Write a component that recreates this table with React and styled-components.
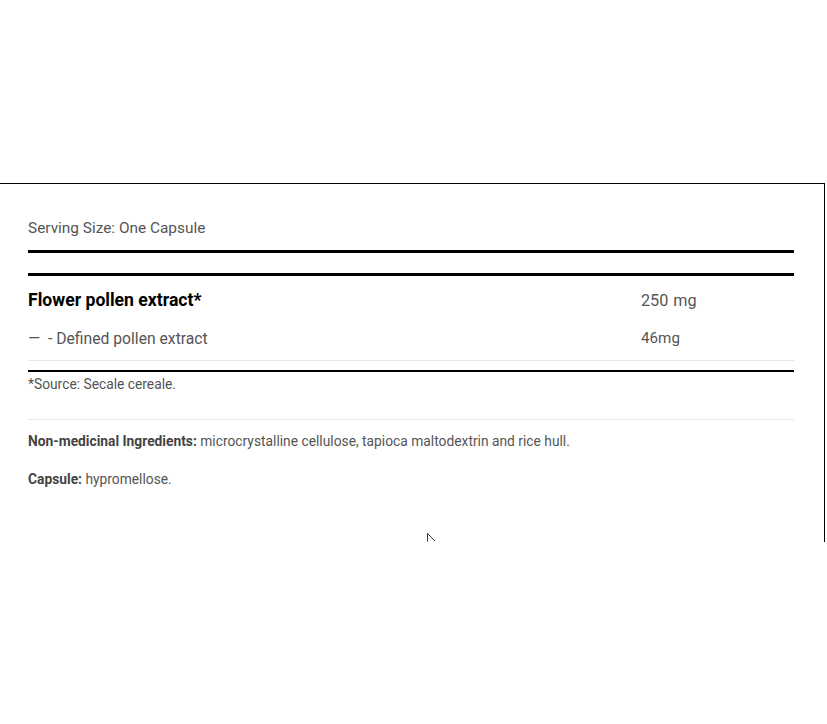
import React from 'react'
import styled, { createGlobalStyle } from 'styled-components'

const GlobalStyle = createGlobalStyle`
   body {
      margin: 0;
      background: #fff;
      font-family: 'Roboto', 'Liberation Sans', sans-serif;
   }
`

const rows = [
   { name: 'Flower pollen extract*', amount: '250 mg', main: true },
   { name: '—  - Defined pollen extract', amount: '46mg' },
]

const App = () => {
   return (
      <Page>
         <GlobalStyle />
         <Panel>
            <Serving>Serving Size: One Capsule</Serving>
            <ThickRule />
            <ThickRule $gap />
            <Table>
               {rows.map((row) => (
                  <Row key={row.name}>
                     <Name $main={row.main}>{row.name}</Name>
                     <Amount $main={row.main}>{row.amount}</Amount>
                  </Row>
               ))}
            </Table>
            <BlackRule />
            <Note>*Source: Secale cereale.</Note>
            <Ingredients>
               <Para>
                  <strong>Non-medicinal Ingredients:</strong> microcrystalline cellulose, tapioca maltodextrin and rice hull.
               </Para>
               <Para>
                  <strong>Capsule:</strong> hypromellose.
               </Para>
            </Ingredients>
            <Cursor width="10" height="10" viewBox="0 0 10 10">
               <path d="M0.5 0.5 V8.5 M0.5 0.5 L8 8" stroke="#333" strokeWidth="1" fill="none" />
            </Cursor>
         </Panel>
      </Page>
   )
}

const Page = styled.div`
   padding-top: 183px;
`

const Panel = styled.div`
   position: relative;
   box-sizing: border-box;
   width: 825px;
   height: 359px;
   border-top: 1px solid #000;
   border-right: 1px solid #000;
   padding: 0 30px 0 28px;
`

const Serving = styled.div`
   padding-top: 34px;
   margin-bottom: 12px;
   font-size: 15.4px;
   line-height: 20px;
   color: #555;
`

const ThickRule = styled.div`
   height: 3px;
   background: #000;
   margin-top: ${(p) => (p.$gap ? '20px' : '0')};
`

const Table = styled.div`
   display: flex;
   flex-direction: column;
   padding-top: 14px;
   padding-bottom: 12px;
   gap: 18px;
   border-bottom: 1px solid #e6e6e6;
`

const Row = styled.div`
   display: grid;
   grid-template-columns: 613px 1fr;
   align-items: center;
   height: 20px;
`

const Name = styled.div`
   white-space: pre;
   font-size: ${(p) => (p.$main ? '17.6px' : '15.7px')};
   font-weight: ${(p) => (p.$main ? 700 : 400)};
   color: ${(p) => (p.$main ? '#000' : '#555')};
`

const Amount = styled.div`
   font-size: ${(p) => (p.$main ? '16.2px' : '15.2px')};
   word-spacing: 1px;
   color: #555;
`

const BlackRule = styled.div`
   margin-top: 9px;
   height: 2px;
   background: #000;
`

const Note = styled.div`
   padding-top: 3px;
   padding-bottom: 26px;
   font-size: 13.8px;
   line-height: 18px;
   color: #555;
   border-bottom: 1px solid #e6e6e6;
`

const Ingredients = styled.div`
   display: flex;
   flex-direction: column;
   gap: 20px;
   padding-top: 12px;
`

const Para = styled.p`
   margin: 0;
   font-size: 13.8px;
   line-height: 18px;
   color: #555;

   strong {
      color: #444;
      font-weight: 700;
   }
`

const Cursor = styled.svg`
   position: absolute;
   left: 427px;
   top: 349px;
`

export default App
